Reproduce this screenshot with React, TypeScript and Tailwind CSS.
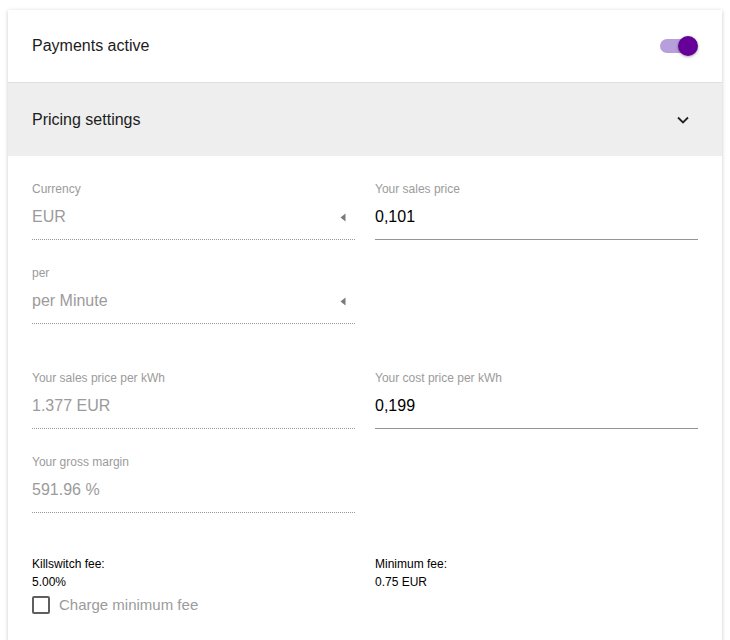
import React from 'react';

type FieldProps = {
  label: string;
  value: string;
  disabled?: boolean;
  select?: boolean;
  className?: string;
};

const Field = ({ label, value, disabled = false, select = false, className = '' }: FieldProps) => {
  const lineStyles = disabled
    ? 'border-b border-dotted border-[#9a9a9a]'
    : 'border-b border-solid border-[#949494]';
  const valueStyles = disabled ? 'text-[#9b9b9b]' : 'text-black';

  return (
    <div className={`flex flex-col ${className}`}>
      <div className="h-[14px] text-[12px] leading-[14px] text-[#9b9b9b]">{label}</div>
      <div className={`mt-[7px] pb-[8px] ${lineStyles}`}>
        <div className={`flex h-[28px] items-center justify-between text-[16px] leading-[28px] ${valueStyles}`}>
          <span>{value}</span>
          {select && (
            <svg width="6" height="9" viewBox="0 0 6 9" className="mr-[9px]">
              <path d="M5.5 0.5 L0.5 4.5 L5.5 8.5 Z" fill="#7a7a7a" />
            </svg>
          )}
        </div>
      </div>
    </div>
  );
};

const Toggle = () => (
  <div className="relative h-[20px] w-[38px]">
    <div className="absolute left-0 top-[3px] h-[14px] w-[34px] rounded-full bg-[#b79fdc]" />
    <div className="absolute right-0 top-0 h-[20px] w-[20px] rounded-full bg-[#650099] shadow-[0_1px_3px_rgba(0,0,0,0.35)]" />
  </div>
);

export default function App() {
  return (
    <div
      className="min-h-[640px] bg-white pl-[8px] pr-[8px] pt-[10px]"
      style={{ fontFamily: '"Liberation Sans", Arial, sans-serif' }}
    >
      <div className="min-h-[640px] bg-white shadow-[0_1px_4px_rgba(0,0,0,0.22)]">
        <div className="flex h-[73px] items-center justify-between border-b border-[#e0e0e0] pl-[24px] pr-[24px]">
          <span className="text-[16px] text-[#1c1c1c]">Payments active</span>
          <Toggle />
        </div>

        <div className="flex h-[73px] items-center justify-between bg-[#eeeeee] pl-[24px] pr-[32px]">
          <span className="text-[16px] text-[#1c1c1c]">Pricing settings</span>
          <svg width="14" height="10" viewBox="0 0 14 10">
            <path d="M2 2.5 L7 7.5 L12 2.5" fill="none" stroke="#222" strokeWidth="1.8" />
          </svg>
        </div>

        <div className="pl-[24px] pr-[24px] pt-[26px]">
          <div className="grid grid-cols-2 gap-x-[20px]">
            <div className="flex flex-col gap-[26px]">
              <Field label="Currency" value="EUR" disabled select />
              <Field label="per" value="per Minute" disabled select />
            </div>
            <div>
              <Field label="Your sales price" value="0,101" />
            </div>
          </div>

          <div className="mt-[47px] grid grid-cols-2 gap-x-[20px]">
            <div className="flex flex-col gap-[26px]">
              <Field label="Your sales price per kWh" value="1.377 EUR" disabled />
              <Field label="Your gross margin" value="591.96 %" disabled />
            </div>
            <div>
              <Field label="Your cost price per kWh" value="0,199" />
            </div>
          </div>

          <div className="mt-[42px] grid grid-cols-2 gap-x-[20px] text-[12px] leading-[18px] text-black">
            <div>
              <div>Killswitch fee:</div>
              <div>5.00%</div>
              <label className="mt-[4px] flex items-center gap-[9px]">
                <span className="h-[18px] w-[18px] rounded-[2px] border-2 border-[#5f5f5f]" />
                <span className="text-[15px] leading-[20px] text-[#9b9b9b]">Charge minimum fee</span>
              </label>
            </div>
            <div>
              <div>Minimum fee:</div>
              <div>0.75 EUR</div>
            </div>
          </div>
        </div>
      </div>
    </div>
  );
}
